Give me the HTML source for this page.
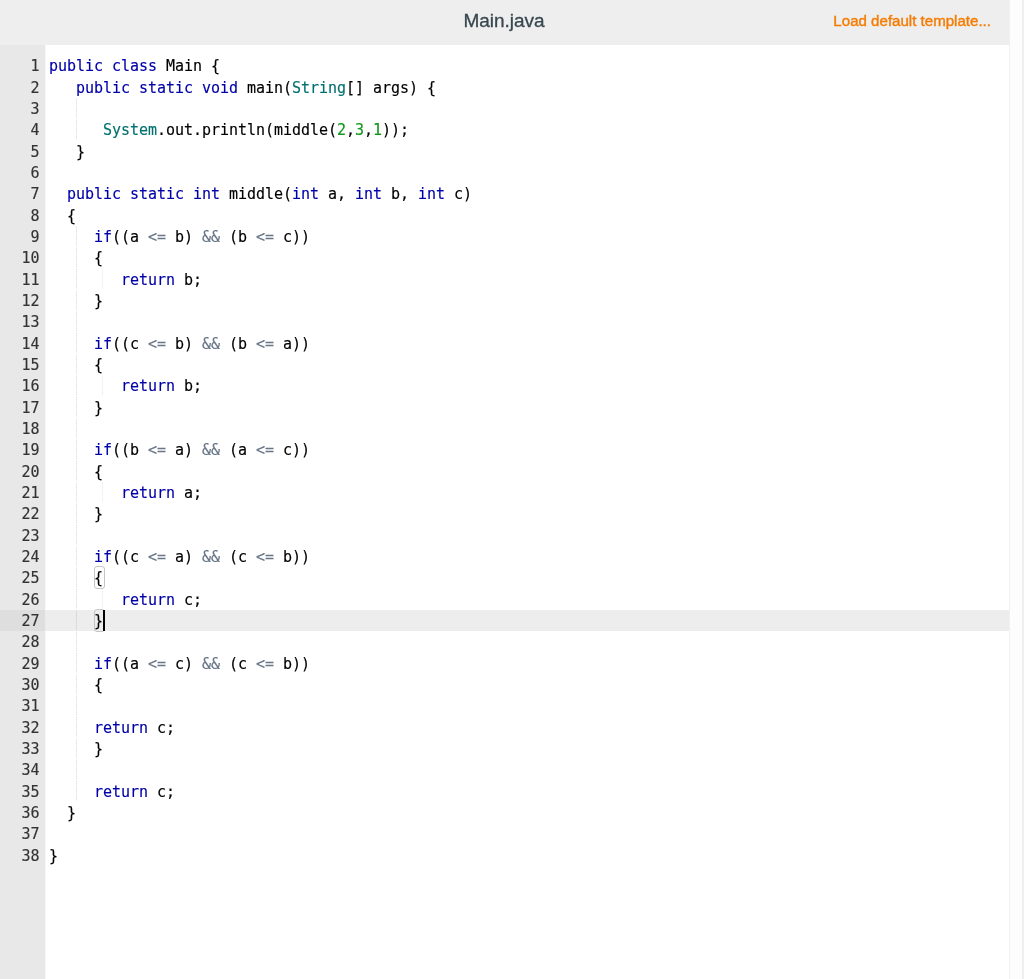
<!DOCTYPE html>
<html lang="en">
<head>
<meta charset="utf-8">
<title>Main.java</title>
<style>
*{box-sizing:border-box;margin:0;padding:0}
html,body{width:1024px;height:979px;overflow:hidden;background:#fff}
body{position:relative;will-change:transform;font-family:"Liberation Sans",sans-serif}
#hdr{position:absolute;left:0;top:0;width:1009px;height:44.5px;background:#eeeeee}
#title{position:absolute;font-weight:normal;left:404px;top:0;width:200px;text-align:center;font-size:19px;line-height:41px;letter-spacing:-.05px;color:#37474f;white-space:nowrap;-webkit-text-stroke:.3px currentColor}
#load{position:absolute;left:790.5px;width:200px;text-align:right;cursor:pointer;top:0;font-size:15.4px;line-height:42px;color:#f57c00;white-space:nowrap;transform:scaleX(.98);transform-origin:100% 50%;-webkit-text-stroke:.4px currentColor}
#side{position:absolute;left:1009px;top:0;width:15px;height:979px;background:#fdfdfd;border-left:1px solid #f1f1f1}
#side2{position:absolute;left:1022px;top:0;width:2px;height:979px;background:#efefef}
#gut{position:absolute;left:0;top:44.5px;width:45px;height:935px;background:#e8e8e8}
#gact{position:absolute;left:0;top:609.77px;width:45px;height:21.3333px;background:#dedede}
#act{position:absolute;left:45px;top:609.77px;width:964px;height:21.3333px;background:#ededed}
.ln,.cl{position:absolute;font-family:"DejaVu Sans Mono","Liberation Mono",monospace;font-size:15px;letter-spacing:-0.0308px;line-height:22px;height:22px;white-space:pre;color:#000;-webkit-text-stroke:0.15px currentColor}
.ln{left:0;width:39.5px;text-align:right;color:#333}
.cl{left:48.9px}
.k{color:#0000aa}
.o{color:#687687}
.t{color:#007070}
.n{color:#109618}
.g{display:block;position:absolute;width:1px;background-image:repeating-linear-gradient(to bottom,rgba(0,0,0,.04) 0,rgba(0,0,0,.04) 1px,rgba(0,0,0,.12) 1px,rgba(0,0,0,.12) 2px)}
.g2{opacity:.6}
.br{position:absolute;width:11px;height:23.33px;border:1px solid #c4c4c4;border-radius:3px}
#ge{position:absolute;left:45px;top:44.5px;width:1px;height:935px;background:rgba(232,232,232,.35)}
#cur{position:absolute;left:103px;top:609.77px;width:2px;height:21.3333px;background:#000}
</style>
</head>
<body>
<header id="hdr"><h1 id="title">Main.java</h1><a id="load">Load default template...</a></header>
<main id="editor">
<div id="gut"></div><div id="gact"></div><div id="act"></div><div id="ge"></div>
<div id="guides">
<i class="g" style="left:76px;top:98px;height:20px"></i>
<i class="g" style="left:76px;top:119px;height:20px"></i>
<i class="g" style="left:76px;top:226px;height:20px"></i>
<i class="g" style="left:76px;top:247px;height:20px"></i>
<i class="g" style="left:76px;top:268px;height:21px"></i>
<i class="g" style="left:76px;top:290px;height:20px"></i>
<i class="g" style="left:76px;top:311px;height:20px"></i>
<i class="g" style="left:76px;top:332px;height:21px"></i>
<i class="g" style="left:76px;top:354px;height:20px"></i>
<i class="g" style="left:76px;top:375px;height:20px"></i>
<i class="g" style="left:76px;top:396px;height:21px"></i>
<i class="g" style="left:76px;top:418px;height:20px"></i>
<i class="g" style="left:76px;top:439px;height:20px"></i>
<i class="g" style="left:76px;top:460px;height:21px"></i>
<i class="g" style="left:76px;top:482px;height:20px"></i>
<i class="g" style="left:76px;top:503px;height:20px"></i>
<i class="g" style="left:76px;top:524px;height:21px"></i>
<i class="g" style="left:76px;top:546px;height:20px"></i>
<i class="g" style="left:76px;top:567px;height:20px"></i>
<i class="g" style="left:76px;top:588px;height:21px"></i>
<i class="g" style="left:76px;top:610px;height:20px"></i>
<i class="g" style="left:76px;top:631px;height:20px"></i>
<i class="g" style="left:76px;top:652px;height:21px"></i>
<i class="g" style="left:76px;top:674px;height:20px"></i>
<i class="g" style="left:76px;top:695px;height:20px"></i>
<i class="g" style="left:76px;top:716px;height:21px"></i>
<i class="g" style="left:76px;top:738px;height:20px"></i>
<i class="g" style="left:76px;top:759px;height:20px"></i>
<i class="g" style="left:76px;top:780px;height:21px"></i>
<i class="g g2" style="left:102px;top:268px;height:21px"></i>
<i class="g g2" style="left:102px;top:375px;height:20px"></i>
<i class="g g2" style="left:102px;top:482px;height:20px"></i>
<i class="g g2" style="left:102px;top:588px;height:21px"></i>
</div>
<div class="br" style="left:93.5px;top:566.10px"></div>
<div class="br" style="left:93.5px;top:608.77px"></div>
<div id="gutter">
<div class="ln" style="top:55px">1</div>
<div class="ln" style="top:77px">2</div>
<div class="ln" style="top:98px">3</div>
<div class="ln" style="top:119px">4</div>
<div class="ln" style="top:141px">5</div>
<div class="ln" style="top:162px">6</div>
<div class="ln" style="top:183px">7</div>
<div class="ln" style="top:205px">8</div>
<div class="ln" style="top:226px">9</div>
<div class="ln" style="top:247px">10</div>
<div class="ln" style="top:269px">11</div>
<div class="ln" style="top:290px">12</div>
<div class="ln" style="top:311px">13</div>
<div class="ln" style="top:333px">14</div>
<div class="ln" style="top:354px">15</div>
<div class="ln" style="top:375px">16</div>
<div class="ln" style="top:397px">17</div>
<div class="ln" style="top:418px">18</div>
<div class="ln" style="top:439px">19</div>
<div class="ln" style="top:461px">20</div>
<div class="ln" style="top:482px">21</div>
<div class="ln" style="top:503px">22</div>
<div class="ln" style="top:525px">23</div>
<div class="ln" style="top:546px">24</div>
<div class="ln" style="top:567px">25</div>
<div class="ln" style="top:589px">26</div>
<div class="ln" style="top:610px">27</div>
<div class="ln" style="top:631px">28</div>
<div class="ln" style="top:653px">29</div>
<div class="ln" style="top:674px">30</div>
<div class="ln" style="top:695px">31</div>
<div class="ln" style="top:717px">32</div>
<div class="ln" style="top:738px">33</div>
<div class="ln" style="top:759px">34</div>
<div class="ln" style="top:781px">35</div>
<div class="ln" style="top:802px">36</div>
<div class="ln" style="top:823px">37</div>
<div class="ln" style="top:845px">38</div>
</div>
<div id="code">
<div class="cl" style="top:55px"><span class="k">public</span> <span class="k">class</span> Main {</div>
<div class="cl" style="top:77px">   <span class="k">public</span> <span class="k">static</span> <span class="k">void</span> main(<span class="t">String</span>[] args) {</div>
<div class="cl" style="top:98px"></div>
<div class="cl" style="top:119px">      <span class="t">System</span>.out.println(middle(<span class="n">2</span>,<span class="n">3</span>,<span class="n">1</span>));</div>
<div class="cl" style="top:141px">   }</div>
<div class="cl" style="top:162px"></div>
<div class="cl" style="top:183px">  <span class="k">public</span> <span class="k">static</span> <span class="k">int</span> middle(<span class="k">int</span> a, <span class="k">int</span> b, <span class="k">int</span> c)</div>
<div class="cl" style="top:205px">  {</div>
<div class="cl" style="top:226px">     <span class="k">if</span>((a <span class="o">&lt;=</span> b) <span class="o">&amp;&amp;</span> (b <span class="o">&lt;=</span> c))</div>
<div class="cl" style="top:247px">     {</div>
<div class="cl" style="top:269px">        <span class="k">return</span> b;</div>
<div class="cl" style="top:290px">     }</div>
<div class="cl" style="top:311px"></div>
<div class="cl" style="top:333px">     <span class="k">if</span>((c <span class="o">&lt;=</span> b) <span class="o">&amp;&amp;</span> (b <span class="o">&lt;=</span> a))</div>
<div class="cl" style="top:354px">     {</div>
<div class="cl" style="top:375px">        <span class="k">return</span> b;</div>
<div class="cl" style="top:397px">     }</div>
<div class="cl" style="top:418px"></div>
<div class="cl" style="top:439px">     <span class="k">if</span>((b <span class="o">&lt;=</span> a) <span class="o">&amp;&amp;</span> (a <span class="o">&lt;=</span> c))</div>
<div class="cl" style="top:461px">     {</div>
<div class="cl" style="top:482px">        <span class="k">return</span> a;</div>
<div class="cl" style="top:503px">     }</div>
<div class="cl" style="top:525px"></div>
<div class="cl" style="top:546px">     <span class="k">if</span>((c <span class="o">&lt;=</span> a) <span class="o">&amp;&amp;</span> (c <span class="o">&lt;=</span> b))</div>
<div class="cl" style="top:567px">     {</div>
<div class="cl" style="top:589px">        <span class="k">return</span> c;</div>
<div class="cl" style="top:610px">     }</div>
<div class="cl" style="top:631px"></div>
<div class="cl" style="top:653px">     <span class="k">if</span>((a <span class="o">&lt;=</span> c) <span class="o">&amp;&amp;</span> (c <span class="o">&lt;=</span> b))</div>
<div class="cl" style="top:674px">     {</div>
<div class="cl" style="top:695px"></div>
<div class="cl" style="top:717px">     <span class="k">return</span> c;</div>
<div class="cl" style="top:738px">     }</div>
<div class="cl" style="top:759px"></div>
<div class="cl" style="top:781px">     <span class="k">return</span> c;</div>
<div class="cl" style="top:802px">  }</div>
<div class="cl" style="top:823px"></div>
<div class="cl" style="top:845px">}</div>
</div>
<div id="cur"></div>
</main>
<div id="side"></div><div id="side2"></div>
</body>
</html>
